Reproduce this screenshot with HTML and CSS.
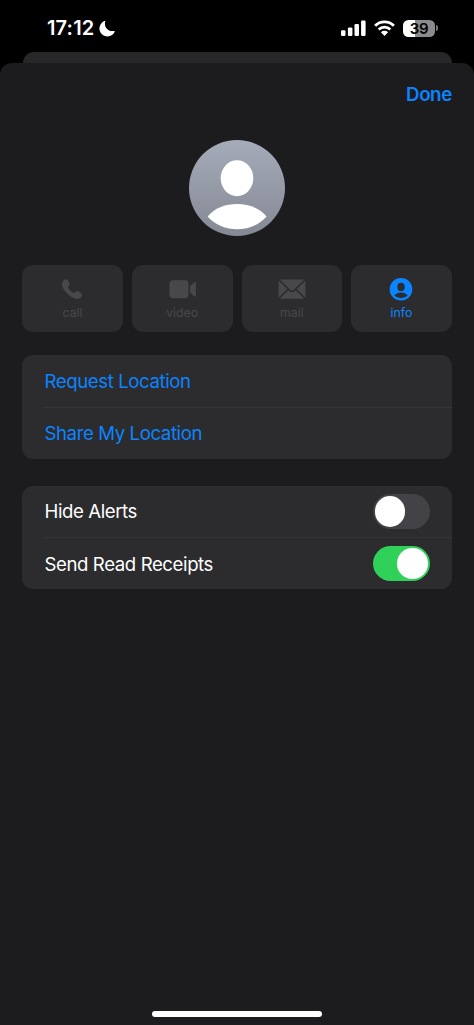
FILE: index.html
```html
<!DOCTYPE html>
<html lang="en">
<head>
<meta charset="utf-8">
<title>Contact details</title>
<link rel="stylesheet" href="styles.css">
</head>
<body>
<div class="phone">
  <header class="status">
    <div class="clock">
      <span class="time">17:12</span>
      <svg class="moon" width="16" height="16" viewBox="0 0 16 16"><path fill="#fff" d="M6.300.3C4.600 5.300 8.600 11 14.900 9.900C15.600 9.800 15.900 10.200 15.700 10.800A8 8 0 1 1 5.300.1C5.900-.1 6.500-.1 6.300.3Z"/></svg>
    </div>
    <div class="indicators">
      <svg width="25" height="17" viewBox="0 0 25 17" fill="#fff"><rect x="0" y="10.200" width="4.500" height="5.800" rx="1.200"/><rect x="6.900" y="7.400" width="4.500" height="8.600" rx="1.200"/><rect x="13.500" y="4" width="4.500" height="12" rx="1.200"/><rect x="20.100" y=".5" width="4.500" height="15.500" rx="1.200"/></svg>
      <svg width="21" height="17" viewBox="0 0 21 17" fill="none" stroke="#fff" stroke-width="2.900"><path d="M1.100 5.800A13.300 13.300 0 0 1 19.900 5.800"/><path d="M4.700 9.500A8.200 8.200 0 0 1 16.300 9.500"/><path fill="#fff" stroke="none" d="M6.900 12.300A5.100 5.100 0 0 1 14.100 12.300L10.500 15.900Z"/></svg>
      <div class="battery"><span class="level">39</span><span class="cap"></span></div>
    </div>
  </header>
  <div class="back-sheet"></div>
  <main class="sheet">
    <div class="toolbar"><span class="done">Done</span></div>
    <svg class="avatar" width="96" height="96" viewBox="0 0 96 96">
      <defs><linearGradient id="avatarFill" x1="0" y1="0" x2="0" y2="1"><stop offset="0" stop-color="#a5abb9"/><stop offset="1" stop-color="#858994"/></linearGradient></defs>
      <circle cx="48" cy="48" r="48" fill="url(#avatarFill)"/>
      <ellipse cx="48" cy="38.200" rx="16.300" ry="18" fill="#fff"/>
      <path fill="#fff" d="M18.600 76.500C26 67.500 37 64 48 64S70 67.500 77.600 76.500C70 85 59 89.300 48 89.300S26 85 18.600 76.500Z"/>
    </svg>
    <div class="actions">
      <div class="action"><svg width="28" height="24" viewBox="0 0 28 24"><path fill="#48484b" d="M4.900 3C6.200 1.700 7.600 1.900 8.600 3.300L10.300 5.800C11 6.900 10.800 7.800 10 8.600L9.200 9.500C8.800 9.900 8.800 10.300 9.100 10.800C10.400 12.900 12.100 14.600 14.300 15.800C14.800 16.100 15.200 16 15.600 15.600L16.600 14.700C17.400 14 18.300 13.900 19.300 14.500L22 16.300C23.400 17.300 23.500 18.700 22.300 19.900C20.700 21.600 18.500 22.300 15.900 21.400C10.200 19.400 5.400 14.600 3.300 9.200C2.400 6.800 3.200 4.600 4.900 3Z"/></svg><span>call</span></div>
      <div class="action"><svg width="28" height="24" viewBox="-1 0 28 24" fill="#48484b"><rect x=".5" y="3.200" width="19" height="18" rx="3.600"/><path d="M20.900 9.400L25 5.200Q26.900 4.100 26.900 6V18.400Q26.900 20.300 25 19.200L20.900 15Z"/></svg><span>video</span></div>
      <div class="action"><svg width="28" height="24" viewBox="0 0 28 24"><rect x=".6" y="2.500" width="26.800" height="19.300" rx="2.500" fill="#48484b"/><path fill="none" stroke="#2c2c2e" stroke-width="1.600" d="M1 3L11.700 13.300Q14 15.400 16.300 13.300L27 3M1.200 21.300L10.100 12.200M26.800 21.300L17.900 12.200"/></svg><span>mail</span></div>
      <div class="action action-active"><svg width="28" height="24" viewBox="0 0 28 24"><circle cx="14" cy="12.200" r="11.300" fill="#0b84ff"/><ellipse cx="14" cy="9.900" rx="3.700" ry="4.200" fill="#2c2c2e"/><path fill="#2c2c2e" d="M7.300 18.600C9 16.500 11.300 15.600 14 15.600S19 16.500 20.700 18.600C18.800 20.300 16.500 20.900 14 20.900S9.200 20.300 7.300 18.600Z"/></svg><span>info</span></div>
    </div>
    <section class="group">
      <div class="row link"><span>Request Location</span></div>
      <div class="row link"><span>Share My Location</span></div>
    </section>
    <section class="group group-settings">
      <div class="row"><span>Hide Alerts</span><span class="switch"><span class="knob"></span></span></div>
      <div class="row"><span>Send Read Receipts</span><span class="switch switch-on"><span class="knob"></span></span></div>
    </section>
    <div class="home-bar"></div>
  </main>
</div>
</body>
</html>
```
FILE: styles.css
```css
* { box-sizing: border-box; }
body { margin: 0; background: #000; color: #fff; font-family: Inter, "Liberation Sans", sans-serif; }
.phone { width: 474px; height: 1025px; display: flex; flex-direction: column; overflow: hidden; }
.status { height: 52px; flex: none; display: flex; justify-content: space-between; align-items: flex-start; padding: 19px 36px 0 47px; }
.clock { display: flex; align-items: center; gap: 5px; height: 19px; }
.time { font-size: 20px; font-weight: 600; line-height: 19px; letter-spacing: .15px; }
.moon { margin-top: 1px; }
.indicators { display: flex; align-items: center; gap: 8px; height: 18px; }
.battery { display: flex; align-items: center; gap: 1px; }
.level { width: 32px; height: 17px; border-radius: 5.500px; background: linear-gradient(90deg, #fff 39%, #8b8b8b 39%); color: #000; font-size: 15px; font-weight: 600; line-height: 17px; letter-spacing: -.4px; text-align: center; }
.cap { width: 2px; height: 6px; border-radius: 0 2px 2px 0; background: #777; }
.back-sheet { height: 11px; flex: none; margin: 0 22.500px; border-radius: 11px 11px 0 0; background: #272729; }
.sheet { flex: 1; display: flex; flex-direction: column; padding: 0 22.200px; border-radius: 12px 12px 0 0; background: #1c1c1e; }
.toolbar { height: 77px; display: flex; justify-content: flex-end; padding-top: 20px; }
.done { color: #0b84ff; font-size: 18.700px; font-weight: 600; line-height: 24px; letter-spacing: -.4px; }
.avatar { align-self: center; flex: none; }
.actions { display: grid; grid-template-columns: repeat(4, 1fr); gap: 9px; margin-top: 29.300px; }
.action { height: 66.500px; display: flex; flex-direction: column; align-items: center; padding-top: 12px; border-radius: 11px; background: #2c2c2e; color: #48484b; font-size: 12.300px; line-height: 16px; }
.action span { margin-top: 4px; }
.action-active { color: #0b84ff; }
.group { margin-top: 23.700px; border-radius: 11px; background: #2c2c2e; }
.group-settings { margin-top: 27px; }
.row { height: 51.600px; margin-left: 22.300px; padding-right: 22px; display: flex; align-items: center; justify-content: space-between; font-size: 18.600px; letter-spacing: -.4px; }
.row + .row { border-top: 1px solid #353537; }
.link { color: #0b84ff; }
.switch { width: 57px; height: 34.500px; padding: 2px; display: flex; border-radius: 18px; background: #434347; }
.knob { width: 30.500px; height: 30.500px; border-radius: 50%; background: #fff; }
.switch-on { justify-content: flex-end; background: #30d158; }
.home-bar { width: 170px; height: 6px; margin: auto auto 8.500px; border-radius: 3px; background: #fff; }
```
